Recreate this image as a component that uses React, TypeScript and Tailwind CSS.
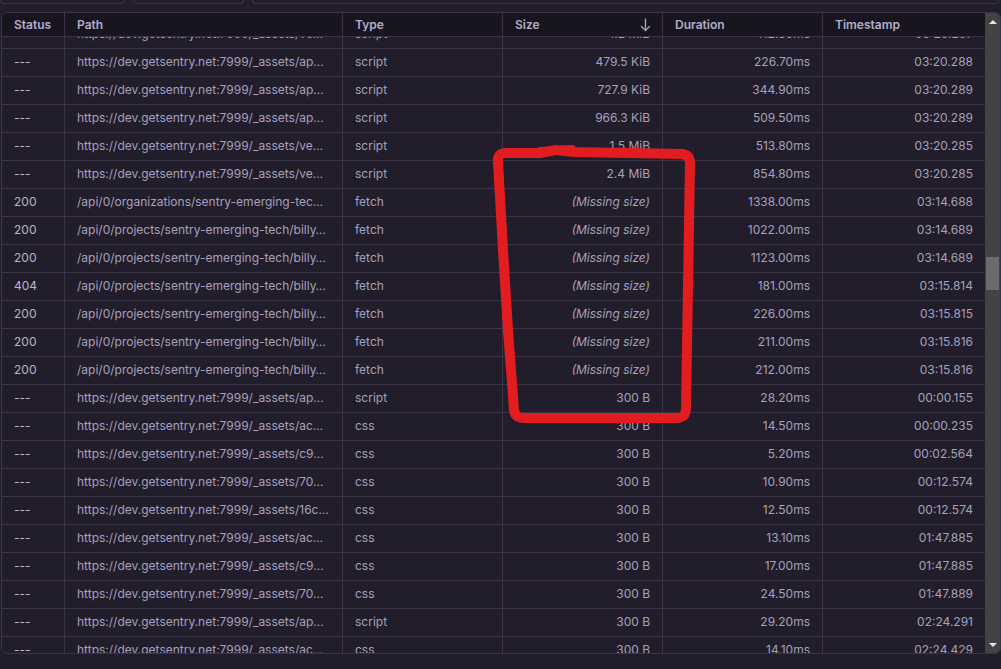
import React, { useLayoutEffect, useRef } from "react";

type Row = { status: string; path: string; type: string; size: string; duration: string; ts: string };

const A = "https://dev.getsentry.net:7999/_assets/";
const rows: Row[] = [
  { status: "---", path: A + "ve…", type: "script", size: "1.2 MiB", duration: "412.30ms", ts: "03:20.287" },
  { status: "---", path: A + "ap…", type: "script", size: "479.5 KiB", duration: "226.70ms", ts: "03:20.288" },
  { status: "---", path: A + "ap…", type: "script", size: "727.9 KiB", duration: "344.90ms", ts: "03:20.289" },
  { status: "---", path: A + "ap…", type: "script", size: "966.3 KiB", duration: "509.50ms", ts: "03:20.289" },
  { status: "---", path: A + "ve…", type: "script", size: "1.5 MiB", duration: "513.80ms", ts: "03:20.285" },
  { status: "---", path: A + "ve…", type: "script", size: "2.4 MiB", duration: "854.80ms", ts: "03:20.285" },
  { status: "200", path: "/api/0/organizations/sentry-emerging-tec…", type: "fetch", size: "", duration: "1338.00ms", ts: "03:14.688" },
  { status: "200", path: "/api/0/projects/sentry-emerging-tech/billy…", type: "fetch", size: "", duration: "1022.00ms", ts: "03:14.689" },
  { status: "200", path: "/api/0/projects/sentry-emerging-tech/billy…", type: "fetch", size: "", duration: "1123.00ms", ts: "03:14.689" },
  { status: "404", path: "/api/0/projects/sentry-emerging-tech/billy…", type: "fetch", size: "", duration: "181.00ms", ts: "03:15.814" },
  { status: "200", path: "/api/0/projects/sentry-emerging-tech/billy…", type: "fetch", size: "", duration: "226.00ms", ts: "03:15.815" },
  { status: "200", path: "/api/0/projects/sentry-emerging-tech/billy…", type: "fetch", size: "", duration: "211.00ms", ts: "03:15.816" },
  { status: "200", path: "/api/0/projects/sentry-emerging-tech/billy…", type: "fetch", size: "", duration: "212.00ms", ts: "03:15.816" },
  { status: "---", path: A + "ap…", type: "script", size: "300 B", duration: "28.20ms", ts: "00:00.155" },
  { status: "---", path: A + "ac…", type: "css", size: "300 B", duration: "14.50ms", ts: "00:00.235" },
  { status: "---", path: A + "c9…", type: "css", size: "300 B", duration: "5.20ms", ts: "00:02.564" },
  { status: "---", path: A + "70…", type: "css", size: "300 B", duration: "10.90ms", ts: "00:12.574" },
  { status: "---", path: A + "16c…", type: "css", size: "300 B", duration: "12.50ms", ts: "00:12.574" },
  { status: "---", path: A + "ac…", type: "css", size: "300 B", duration: "13.10ms", ts: "01:47.885" },
  { status: "---", path: A + "c9…", type: "css", size: "300 B", duration: "17.00ms", ts: "01:47.885" },
  { status: "---", path: A + "70…", type: "css", size: "300 B", duration: "24.50ms", ts: "01:47.889" },
  { status: "---", path: A + "ap…", type: "script", size: "300 B", duration: "29.20ms", ts: "02:24.291" },
  { status: "---", path: A + "ac…", type: "css", size: "300 B", duration: "14.10ms", ts: "02:24.429" },
  { status: "---", path: A + "70…", type: "css", size: "300 B", duration: "11.40ms", ts: "02:24.430" },
];

const grid = "grid grid-cols-[63px_278px_160px_160px_160px_1fr]";
const cell = "border-r border-[#3b3447] px-3 flex items-center whitespace-nowrap overflow-hidden";
const bcell = cell + " pb-[2px]";

export default function App() {
  const bodyRef = useRef<HTMLDivElement>(null);
  useLayoutEffect(() => {
    if (bodyRef.current) bodyRef.current.scrollTop = 16;
  }, []);

  return (
    <div
      className="relative w-[1001px] h-[669px] overflow-hidden bg-[#221d2a] text-[12px] text-[#a6a0be]"
      style={{ fontFamily: "Inter, 'Noto Sans', sans-serif" }}
    >
      {/* toolbar (bottom edges of filter controls) */}
      <div className="flex gap-[8px] h-[4px] pr-[2px]">
        <div className="w-[125px] border-x border-b border-[#3b3447] rounded-b-md" />
        <div className="w-[111px] border-x border-b border-[#3b3447] rounded-b-md" />
        <div className="flex-1 border-x border-b border-[#3b3447] rounded-b-md" />
      </div>

      {/* table */}
      <div className="mt-[8px] ml-[1px] w-[1000px] h-[642px] border border-[#3b3447] rounded-md overflow-hidden flex">
        <div className="flex-1 flex flex-col min-w-0">
          <div className={`${grid} h-[24px] shrink-0 bg-[#19151f] border-b border-[#3b3447] font-semibold text-[#b3adc9]`}>
            <div className={cell}>Status</div>
            <div className={cell}>Path</div>
            <div className={cell}>Type</div>
            <div className={`${cell} justify-between`}>
              <span>Size</span>
              <svg width="11" height="14" viewBox="0 0 11 14" className="mr-[-1px]" fill="none" stroke="#a19bb8" strokeWidth="1.4" strokeLinecap="round" strokeLinejoin="round">
                <path d="M5.5 1 V12.5" />
                <path d="M1.5 8.5 L5.5 12.5 L9.5 8.5" />
              </svg>
            </div>
            <div className={cell}>Duration</div>
            <div className={`${cell} border-r-0`}>Timestamp</div>
          </div>
          <div ref={bodyRef} className="flex-1 overflow-hidden">
            {rows.map((r, i) => (
              <div key={i} className={`${grid} h-[28px] border-b border-[#3b3447] bg-[#221d2a]`}>
                <div className={`${bcell} text-[#b9b4cb]`}>{r.status}</div>
                <div className={bcell}>{r.path}</div>
                <div className={bcell}>{r.type}</div>
                <div className={`${bcell} justify-end`}>
                  {r.size ? r.size : <span className="italic">(Missing size)</span>}
                </div>
                <div className={`${bcell} justify-end`}>{r.duration}</div>
                <div className={`${bcell} justify-end border-r-0`}>{r.ts}</div>
              </div>
            ))}
          </div>
        </div>
        {/* scrollbar */}
        <div className="w-[15px] shrink-0 bg-[#434343] flex flex-col items-center">
          <div className="h-[17px] flex items-center justify-center">
            <div className="w-0 h-0 border-x-[4px] border-x-transparent border-b-[4px] border-b-[#e6e6e6]" />
          </div>
          <div className="flex-1 w-full px-[1px]">
            <div className="mt-[227px] h-[33px] bg-[#6b6b6b]" />
          </div>
          <div className="h-[17px] flex items-center justify-center">
            <div className="w-0 h-0 border-x-[4px] border-x-transparent border-t-[4px] border-t-[#e6e6e6]" />
          </div>
        </div>
      </div>

      {/* red hand-drawn annotation */}
      <svg className="absolute left-0 top-0 pointer-events-none" width="1001" height="669" viewBox="0 0 1001 669">
        <path
          d="M 514 410 L 508 330 L 503 250 L 498 162 Q 497 153 506 153 L 540 153 L 556 150 L 574 152 L 682 154 Q 690 155 690 163 L 686 408 Q 686 418 677 418 L 524 418 Q 515 418 514 410 Z"
          fill="none"
          stroke="#e21d1f"
          strokeWidth="10"
          strokeLinejoin="round"
          strokeLinecap="round"
        />
        <path d="M 540 151 L 572 149" stroke="#e21d1f" strokeWidth="8" strokeLinecap="round" fill="none" />
      </svg>
    </div>
  );
}
